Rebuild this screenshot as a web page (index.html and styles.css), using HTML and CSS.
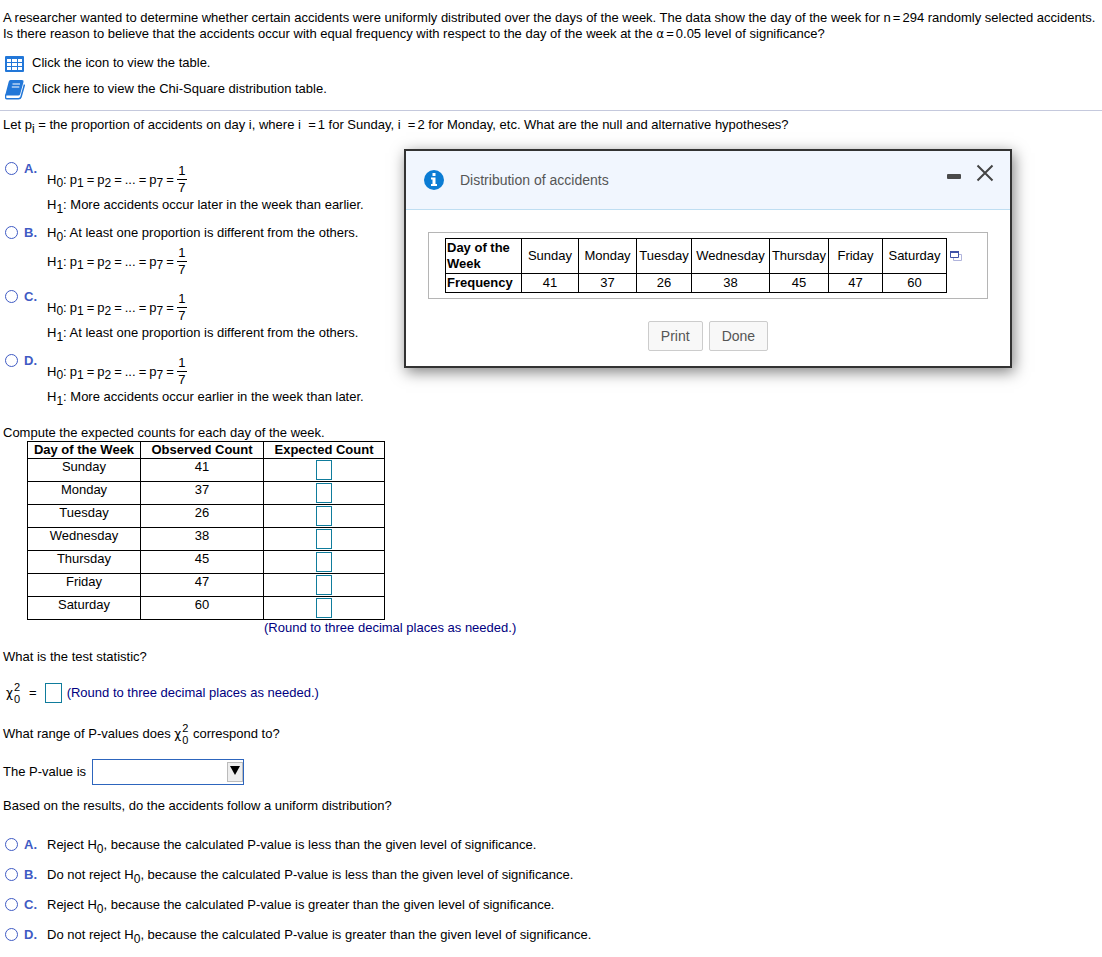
FILE: index.html
```
<!DOCTYPE html>
<html lang="en">
<head>
<meta charset="utf-8">
<title>Chi-Square Goodness of Fit</title>
<link rel="stylesheet" href="styles.css">
</head>
<body>
<main class="page">
  <section class="intro">
    <p class="text">A researcher wanted to determine whether certain accidents were uniformly distributed over the days of the week. The data show the day of the week for n<span class="op">=</span>294 randomly selected accidents.<br>Is there reason to believe that the accidents occur with equal frequency with respect to the day of the week at the <span class="greek">α</span><span class="op">=</span>0.05 level of significance?</p>
    <a class="resource" href="#accidents">
      <svg class="resource-icon" viewBox="0 0 20 20" aria-hidden="true"><rect y="2" width="19" height="16" rx="1" fill="#2277d8"/><g fill="#fff"><path d="M2 5h4v3H2zM7 5h5v3H7zM13 5h4v3h-4zM2 9h4v3H2zM7 9h5v3H7zM13 9h4v3h-4zM2 13h4v3H2zM7 13h5v3H7zM13 13h4v3h-4z"/></g></svg>
      <span>Click the icon to view the table.</span>
    </a>
    <a class="resource" href="#chi">
      <svg class="resource-icon" viewBox="0 0 20 20" aria-hidden="true"><path d="M5.500 0H17q2 0 1.500 2l-3.300 12q-.500 1.500-2 1.500H1.500Q0 15.500.5 14L3.700 1.800Q4 0 5.500 0z" fill="#2277d8"/><path d="M.8 14.500Q-.2 18.700 2 18.700h11.500q2 0 2.500-1.700L19.500 4.500" fill="none" stroke="#2277d8" stroke-width="1.500"/><path d="M7.500 4h7.500M6.800 7h7.500" stroke="#fff" stroke-width="1.200"/></svg>
      <span>Click here to view the Chi-Square distribution table.</span>
    </a>
  </section>

  <section class="question">
    <p class="text">Let p<sub>i</sub> = the proportion of accidents on day i, where i&nbsp; <span class="op-after">=</span>1 for Sunday, i&nbsp; <span class="op-after">=</span>2 for Monday, etc. What are the null and alternative hypotheses?</p>

    <div class="options hypotheses" role="radiogroup" aria-label="Hypotheses">
      <label class="option"><input type="radio" name="hyp"><b class="letter">A.</b>
        <span class="answer">
          <span class="equation">H<sub>0</sub>:<i class="gap"></i>p<sub>1</sub><span class="eq">=</span>p<sub>2</sub><span class="eq">=</span><span class="dots">...</span><span class="eq">=</span>p<sub>7</sub><span class="eq">=</span><span class="fraction"><span>1</span><span>7</span></span></span>
          <span class="line">H<sub>1</sub>: More accidents occur later in the week than earlier.</span>
        </span></label>
      <label class="option"><input type="radio" name="hyp"><b class="letter">B.</b>
        <span class="answer">
          <span class="line">H<sub>0</sub>: At least one proportion is different from the others.</span>
          <span class="equation">H<sub>1</sub>:<i class="gap"></i>p<sub>1</sub><span class="eq">=</span>p<sub>2</sub><span class="eq">=</span><span class="dots">...</span><span class="eq">=</span>p<sub>7</sub><span class="eq">=</span><span class="fraction"><span>1</span><span>7</span></span></span>
        </span></label>
      <label class="option"><input type="radio" name="hyp"><b class="letter">C.</b>
        <span class="answer">
          <span class="equation">H<sub>0</sub>:<i class="gap"></i>p<sub>1</sub><span class="eq">=</span>p<sub>2</sub><span class="eq">=</span><span class="dots">...</span><span class="eq">=</span>p<sub>7</sub><span class="eq">=</span><span class="fraction"><span>1</span><span>7</span></span></span>
          <span class="line">H<sub>1</sub>: At least one proportion is different from the others.</span>
        </span></label>
      <label class="option"><input type="radio" name="hyp"><b class="letter">D.</b>
        <span class="answer">
          <span class="equation">H<sub>0</sub>:<i class="gap"></i>p<sub>1</sub><span class="eq">=</span>p<sub>2</sub><span class="eq">=</span><span class="dots">...</span><span class="eq">=</span>p<sub>7</sub><span class="eq">=</span><span class="fraction"><span>1</span><span>7</span></span></span>
          <span class="line">H<sub>1</sub>: More accidents occur earlier in the week than later.</span>
        </span></label>
    </div>

    <p class="text">Compute the expected counts for each day of the week.</p>
    <table class="counts">
      <thead><tr><th>Day of the Week</th><th>Observed Count</th><th>Expected Count</th></tr></thead>
      <tbody>
        <tr><td>Sunday</td><td>41</td><td><input class="blank" type="text" aria-label="Expected count, Sunday"></td></tr>
        <tr><td>Monday</td><td>37</td><td><input class="blank" type="text" aria-label="Expected count, Monday"></td></tr>
        <tr><td>Tuesday</td><td>26</td><td><input class="blank" type="text" aria-label="Expected count, Tuesday"></td></tr>
        <tr><td>Wednesday</td><td>38</td><td><input class="blank" type="text" aria-label="Expected count, Wednesday"></td></tr>
        <tr><td>Thursday</td><td>45</td><td><input class="blank" type="text" aria-label="Expected count, Thursday"></td></tr>
        <tr><td>Friday</td><td>47</td><td><input class="blank" type="text" aria-label="Expected count, Friday"></td></tr>
        <tr><td>Saturday</td><td>60</td><td><input class="blank" type="text" aria-label="Expected count, Saturday"></td></tr>
      </tbody>
    </table>
    <p class="text hint table-hint">(Round to three decimal places as needed.)</p>

    <p class="text statistic-prompt">What is the test statistic?</p>
    <label class="statistic"><span class="chi"><span class="greek">χ</span><span class="scripts"><span>2</span><span>0</span></span></span><span>=</span><input class="blank large" type="text"><span class="hint">(Round to three decimal places as needed.)</span></label>
    <p class="text range">What range of P-values does <span class="chi"><span class="greek">χ</span><span class="scripts"><span>2</span><span>0</span></span></span> correspond to?</p>
    <label class="pvalue"><span>The P-value is</span>
      <span class="picker"><select><option></option></select><span class="arrow" aria-hidden="true"><svg viewBox="0 0 10 10"><path d="M0 0h10L5 9z"/></svg></span></span>
    </label>
    <p class="text">Based on the results, do the accidents follow a uniform distribution?</p>

    <div class="options conclusions" role="radiogroup" aria-label="Conclusion">
      <label class="option"><input type="radio" name="end"><b class="letter">A.</b><span class="line">Reject H<sub>0</sub>, because the calculated P-value is less than the given level of significance.</span></label>
      <label class="option"><input type="radio" name="end"><b class="letter">B.</b><span class="line">Do not reject H<sub>0</sub>, because the calculated P-value is less than the given level of significance.</span></label>
      <label class="option"><input type="radio" name="end"><b class="letter">C.</b><span class="line">Reject H<sub>0</sub>, because the calculated P-value is greater than the given level of significance.</span></label>
      <label class="option"><input type="radio" name="end"><b class="letter">D.</b><span class="line">Do not reject H<sub>0</sub>, because the calculated P-value is greater than the given level of significance.</span></label>
    </div>
  </section>
</main>

<div class="dialog" id="accidents" role="dialog" aria-labelledby="dialog-title">
  <header class="dialog-head">
    <svg class="info" viewBox="0 0 20 20" aria-hidden="true"><circle cx="10" cy="10" r="10" fill="#0b7cd4"/><path d="M8.500 3h3v3h-3zM7 7.500h4.500v6.500H13v2H7v-2h1.500V9.500H7z" fill="#fff"/></svg>
    <h2 class="dialog-title" id="dialog-title">Distribution of accidents</h2>
    <button class="window-button" type="button" aria-label="Minimize"><svg viewBox="0 0 18 18"><rect x="2" y="10" width="14" height="5" rx="1" fill="#4a4a4a"/></svg></button>
    <button class="window-button" type="button" aria-label="Close"><svg viewBox="0 0 18 18"><path d="M1.500 1.500l15 15M16.500 1.500l-15 15" stroke="#444" stroke-width="2"/></svg></button>
  </header>
  <div class="dialog-body">
    <div class="data-frame">
      <table class="data">
        <colgroup><col class="w-head"><col class="w-sun"><col class="w-mon"><col class="w-tue"><col class="w-wed"><col class="w-thu"><col class="w-fri"><col class="w-sat"></colgroup>
        <tr><th scope="row">Day of the Week</th><td>Sunday</td><td>Monday</td><td>Tuesday</td><td>Wednesday</td><td>Thursday</td><td>Friday</td><td>Saturday</td></tr>
        <tr><th scope="row">Frequency</th><td>41</td><td>37</td><td>26</td><td>38</td><td>45</td><td>47</td><td>60</td></tr>
      </table>
      <button class="popout" type="button" aria-label="Open data"><svg viewBox="0 0 12 10"><path d="M3.500 3.500h8v6h-8z" fill="#fff" stroke="#b0b4dc"/><path d="M.5.5h8v6h-8z" fill="#fff" stroke="#4053a8"/><path d="M0 0h9v2H0z" fill="#4053a8"/></svg></button>
    </div>
    <div class="dialog-actions"><button type="button">Print</button><button type="button">Done</button></div>
  </div>
</div>
</body>
</html>
```
FILE: styles.css
```
* { box-sizing: border-box; }
body {
  margin: 0;
  position: relative;
  background: #fff;
  color: #000;
  font: 13px/16px "Liberation Sans", Arial, sans-serif;
}
.text { margin: 0; padding: 0 3px; }
sub { font-size: 12px; line-height: 0; vertical-align: -4px; }
.op { margin: 0 2px; }
.op-after { margin-right: 2px; }
.greek { font-family: "DejaVu Sans", sans-serif; font-size: 12px; line-height: 0; }

.intro { padding: 10px 0 8px; border-bottom: 1px solid #c5c9dd; }
.intro .text { margin-bottom: 8px; }
.resource {
  display: flex;
  align-items: center;
  gap: 7px;
  height: 26px;
  padding-left: 5px;
  color: inherit;
  text-decoration: none;
}
.resource-icon { width: 20px; height: 20px; margin-top: 2px; }

.question { padding-top: 6px; }

.options { display: flex; flex-direction: column; }
.hypotheses { gap: 12px; padding: 28px 0 20px; }
.conclusions { gap: 14px; padding: 23px 0; }
.option { display: flex; padding-left: 5px; }
.option input {
  appearance: none;
  width: 13px;
  height: 13px;
  margin: 1px 6px 0 0;
  border: 1px solid #3f5bc4;
  border-radius: 50%;
  background: #fff;
}
.option input:checked { background: #3f5bc4; }
.letter { width: 23px; color: #3f5bc4; }
.line { display: block; }
.equation { display: flex; align-items: center; height: 36px; padding-top: 2px; }
.equation:last-child { padding-top: 6px; }
.equation sub { padding-top: 6px; font-size: 12px; }
.gap { width: 3px; }
.eq { margin: 0 3px; }
.dots { width: 11px; }
.fraction { display: flex; flex-direction: column; width: 10px; padding-bottom: 2px; text-align: center; }
.fraction span + span { border-top: 1px solid #000; }

table { border-collapse: collapse; }
td, th { padding: 0; border: 1px solid #000; text-align: center; }
.counts { margin-left: 27px; }
.counts th { width: 121px; height: 17px; }
.counts th:nth-child(1) { width: 113px; }
.counts th:nth-child(2) { width: 123px; }
.counts td { height: 23px; vertical-align: top; }
.blank {
  display: block;
  width: 16px;
  height: 20px;
  margin: 1px auto;
  padding: 0;
  border: 1px solid #0f7c9c;
  background: #fff;
}
.blank.large { width: 17px; margin: 0; }
.hint { color: #000080; }
.table-hint { padding-left: 264px; }

.statistic-prompt { margin-top: 13px; }
.statistic { display: flex; align-items: center; gap: 8px; margin: 16px 0; padding-left: 6px; height: 24px; }
.statistic .hint { margin-left: -3px; }
.chi { display: inline-flex; align-items: center; gap: 1px; height: 16px; margin-right: 1px; vertical-align: bottom; }
.scripts { display: flex; flex-direction: column; font-size: 11px; line-height: 12px; }
.range { margin: 21px 0 17px; }
.pvalue { display: flex; align-items: center; gap: 6px; padding-left: 3px; margin-bottom: 13px; }
.picker { display: grid; width: 152px; }
.picker select, .arrow { grid-area: 1 / 1; }
.picker select { appearance: none; width: 100%; height: 26px; border: 1px solid #2d65bd; background: #fff; }
.arrow {
  display: flex;
  justify-content: center;
  justify-self: end;
  width: 16px;
  height: 20px;
  margin: 3px 1px;
  padding-top: 3px;
  border: 1px solid #bbb;
  background: #eee;
  pointer-events: none;
}
.arrow svg { width: 10px; height: 10px; }

.dialog {
  position: absolute;
  top: 149px;
  left: 404px;
  width: 608px;
  border: 2px solid #333;
  background: #fff;
  box-shadow: 2px 4px 14px rgba(0, 0, 0, .5);
}
.dialog-head {
  display: flex;
  align-items: center;
  height: 59px;
  padding: 0 16px 0 18px;
  border-bottom: 1px solid #bfdef2;
  background: #f1f6fe;
}
.info { width: 20px; height: 20px; }
.dialog-title { flex: 1; margin: 0 0 0 16px; color: #555; font-size: 14px; font-weight: normal; }
.window-button { width: 18px; height: 18px; margin: 0 0 14px 13px; padding: 0; border: 0; background: none; }
.window-button svg, .popout svg { display: block; width: 100%; }
.dialog-body { padding: 22px; }
.data-frame { display: flex; gap: 3px; padding: 5px 16px; border: 1px solid #b5b5b5; }
.data { table-layout: fixed; width: 502px; }
.w-head { width: 76px; }
.w-sun { width: 57px; }
.w-mon { width: 58px; }
.w-tue { width: 55px; }
.w-wed { width: 78px; }
.w-thu { width: 59px; }
.w-fri { width: 54px; }
.w-sat { width: 64px; }
.data td { height: 19px; }
.data tr:first-child td { height: 35px; }
.data th { padding: 0 1px; text-align: left; }
.popout { width: 12px; height: 10px; margin-top: 13px; padding: 0; border: 0; background: none; }
.dialog-actions { display: flex; justify-content: center; gap: 6px; margin: 22px 0 -7px; }
.dialog-actions button {
  height: 30px;
  padding: 0 12px;
  border: 1px solid #ccc;
  border-radius: 2px;
  background: #f8f8f8;
  color: #555;
  font: 14px "Liberation Sans", Arial, sans-serif;
}
```
